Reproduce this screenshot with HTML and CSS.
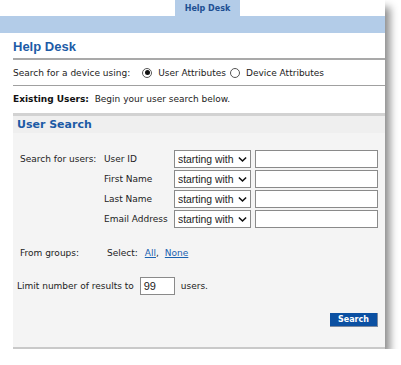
FILE: index.html
```html
<!DOCTYPE html>
<html>
<head>
<meta charset="utf-8">
<link rel="stylesheet" href="styles.css">
</head>
<body>
<div class="panel">
  <div class="tabs"><div class="tab">Help Desk</div></div>
  <div class="band"></div>
  <div class="content">
    <h1 class="title">Help Desk</h1>
    <div class="device-row">
      <span class="lbl">Search for a device using:</span>
      <label class="opt"><span class="radio checked"></span>User Attributes</label>
      <label class="opt"><span class="radio"></span>Device Attributes</label>
    </div>
    <div class="existing"><b>Existing Users:</b>&nbsp; Begin your user search below.</div>
    <div class="section">
      <div class="sec-head">User Search</div>
      <div class="sec-body">
        <div class="grid">
          <div class="c1">Search for users:</div>
          <div class="c2">User ID</div>
          <div class="sel"><span>starting with</span><svg width="10" height="7" viewBox="0 0 10 7"><path d="M1 1.2 L5 5.2 L9 1.2" fill="none" stroke="#111" stroke-width="1.7"/></svg></div>
          <div class="txt"></div>

          <div class="c1"></div>
          <div class="c2">First Name</div>
          <div class="sel"><span>starting with</span><svg width="10" height="7" viewBox="0 0 10 7"><path d="M1 1.2 L5 5.2 L9 1.2" fill="none" stroke="#111" stroke-width="1.7"/></svg></div>
          <div class="txt"></div>

          <div class="c1"></div>
          <div class="c2">Last Name</div>
          <div class="sel"><span>starting with</span><svg width="10" height="7" viewBox="0 0 10 7"><path d="M1 1.2 L5 5.2 L9 1.2" fill="none" stroke="#111" stroke-width="1.7"/></svg></div>
          <div class="txt"></div>

          <div class="c1"></div>
          <div class="c2">Email Address</div>
          <div class="sel"><span>starting with</span><svg width="10" height="7" viewBox="0 0 10 7"><path d="M1 1.2 L5 5.2 L9 1.2" fill="none" stroke="#111" stroke-width="1.7"/></svg></div>
          <div class="txt"></div>
        </div>
        <div class="groups">
          <span class="g1">From groups:</span>
          <span class="g2">Select:</span>
          <a class="lnk" href="#">All</a><span class="comma">,</span>
          <a class="lnk" href="#">None</a>
        </div>
        <div class="limit">
          <span>Limit number of results to</span>
          <span class="num">99</span>
          <span>users.</span>
        </div>
        <div class="actions"><span class="btn">Search</span></div>
      </div>
    </div>
  </div>
</div>
</body>
</html>
```
FILE: styles.css
```css
html, body { margin: 0; padding: 0; background: #fff; }
body { font-family: "DejaVu Sans", Verdana, sans-serif; font-size: 9px; color: #222; }

.panel {
  width: 385px;
  height: 349px;
  background: #fff;
  box-shadow: 5px 7px 8px rgba(0,0,0,0.45);
  display: flex;
  flex-direction: column;
}

.tabs { height: 16px; display: flex; padding-left: 175px; }
.tab {
  width: 65px;
  background: #b3cce8;
  color: #1d4f92;
  font-weight: bold;
  font-size: 8px;
  display: flex;
  align-items: center;
  justify-content: center;
  padding-top: 1px;
  box-sizing: border-box;
}
.band { height: 17px; background: #b3cce8; }

.content { padding-left: 13px; flex: 1; display: flex; flex-direction: column; }

.title {
  margin: 0;
  height: 27px;
  padding-top: 1px;
  box-sizing: border-box;
  display: flex;
  align-items: center;
  font-family: "Liberation Sans", Arial, sans-serif;
  font-size: 13px;
  font-weight: bold;
  color: #1c5ba6;
  border-bottom: 2px solid #a9a9a9;
}

.device-row {
  height: 25px;
  display: flex;
  align-items: center;
  border-bottom: 1px solid #a0a0a0;
}
.device-row .lbl { margin-right: 12px; }
.opt { display: flex; align-items: center; }
.opt + .opt { margin-left: 4px; }
.radio {
  width: 10px; height: 10px;
  box-sizing: border-box;
  border: 1px solid #555;
  border-radius: 50%;
  background: #fff;
  margin-right: 6px;
  display: flex; align-items: center; justify-content: center;
}
.radio.checked::after {
  content: ""; width: 5px; height: 5px; border-radius: 50%; background: #111;
}

.existing {
  height: 27px;
  display: flex;
  align-items: center;
  padding-bottom: 2px;
  box-sizing: border-box;
}
.existing b { color: #111; }

.section {
  flex: 1;
  background: #f4f4f4;
  border-top: 3px solid #d2d2d2;
  border-bottom: 2px solid #c9c9c9;
  display: flex;
  flex-direction: column;
}
.sec-head {
  height: 17px;
  display: flex;
  align-items: center;
  padding-left: 4px;
  background: #efefef;
  font-size: 11px;
  font-weight: bold;
  color: #1c5ba6;
}
.sec-body { padding: 17px 7px 0 7px; display: flex; flex-direction: column; }

.grid {
  display: grid;
  grid-template-columns: 84px 70px 77px 123px;
  column-gap: 0;
  row-gap: 2px;
  grid-auto-rows: 18px;
}
.c1, .c2 { display: flex; align-items: center; }
.sel {
  border: 1px solid #8a8a8a;
  background: #fff;
  font-family: "Liberation Sans", Arial, sans-serif;
  font-size: 10.4px;
  color: #222;
  display: flex;
  align-items: center;
  justify-content: space-between;
  padding: 0 3px 0 3px;
  box-sizing: border-box;
  width: 77px;
  white-space: nowrap;
}
.sel svg { flex: none; width: 9px; height: 7px; }
.txt {
  margin-left: 4px;
  width: 123px;
  border: 1px solid #8a8a8a;
  background: #fff;
  box-sizing: border-box;
}

.groups {
  margin-top: 18px;
  height: 14px;
  display: flex;
  align-items: center;
}
.g1 { width: 87px; }
.g2 { margin-right: 7px; }
.lnk { color: #1a62b0; text-decoration: underline; }
.comma { margin-right: 6px; }

.limit {
  margin-top: 17px;
  margin-left: -3px;
  height: 18px;
  display: flex;
  align-items: center;
}
.num {
  margin: 0 6px 0 6px;
  width: 35px;
  height: 18px;
  box-sizing: border-box;
  border: 1px solid #8a8a8a;
  background: #fff;
  font-family: "Liberation Sans", Arial, sans-serif;
  font-size: 11px;
  padding-left: 3px;
  display: flex;
  align-items: center;
}

.actions { display: flex; justify-content: flex-end; margin-top: 18px; }
.btn {
  width: 48px;
  height: 14px;
  box-sizing: border-box;
  background: #0b50a2;
  color: #fff;
  font-weight: bold;
  font-size: 8px;
  display: flex;
  align-items: center;
  justify-content: center;
  border-right: 1px solid #7c8aa0;
  border-bottom: 1px solid #7c8aa0;
}
```
